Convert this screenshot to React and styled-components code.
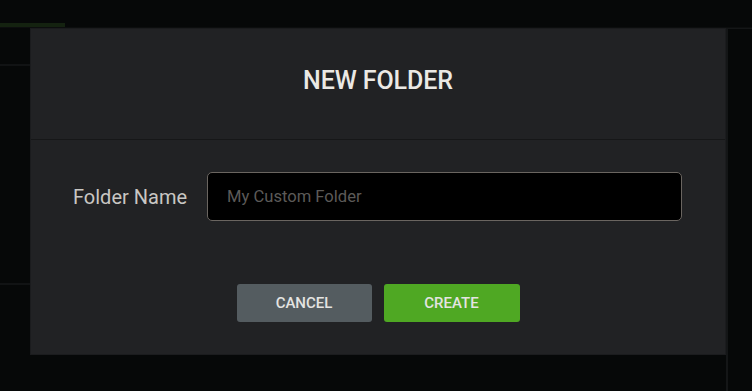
import React from "react";
import styled, { createGlobalStyle } from "styled-components";

const Global = createGlobalStyle`
  html, body { margin: 0; padding: 0; background: #060808; }
  body { font-family: Roboto, "Liberation Sans", Arial, sans-serif; }
  * { box-sizing: border-box; }
`;

const Page = styled.div`
  position: relative;
  width: 752px;
  height: 391px;
  overflow: hidden;
  background: #060808;
  display: flex;
  flex-direction: column;
`;

const TopBar = styled.div`
  height: 28px;
  display: flex;
  align-items: flex-end;
  border-bottom: 1px solid #0c0e0e;
`;

const Tab = styled.div`
  width: 65px;
  height: 4px;
  background: #142210;
`;

const Body = styled.div`
  flex: 1;
  display: flex;
`;

const LeftCol = styled.div`
  width: 30px;
  display: flex;
  flex-direction: column;
`;

const Cell = styled.div`
  height: ${(p) => p.h}px;
  border-bottom: 2px solid #111314;
`;

const Center = styled.div`
  flex: 1;
`;

const RightCol = styled.div`
  width: 26px;
  border-left: 2px solid #141617;
  border-top: 1px solid #141617;
`;

const Dialog = styled.div`
  position: absolute;
  left: 30px;
  top: 28px;
  width: 696px;
  height: 327px;
  background: #212224;
  border: 1px solid #1b1c1e;
  display: flex;
  flex-direction: column;
`;

const Header = styled.div`
  height: 111px;
  display: flex;
  align-items: center;
  justify-content: center;
  border-bottom: 1px solid #161718;
`;

const Title = styled.h2`
  margin: -8px 0 0 0;
  font-size: 25px;
  font-weight: 500;
  color: #ebe9e5;
  letter-spacing: -0.1px;
`;

const Content = styled.div`
  display: flex;
  flex-direction: column;
  flex: 1;
`;

const FieldRow = styled.div`
  display: flex;
  align-items: center;
  padding: 32px 0 0 42px;
  gap: 20px;
`;

const Label = styled.label`
  font-size: 20px;
  color: #c9c7c3;
  width: 114px;
  white-space: nowrap;
`;

const Input = styled.input`
  width: 475px;
  height: 49px;
  background: #000;
  border: 1px solid #6a6560;
  border-radius: 5px;
  padding: 0 19px;
  font-family: Roboto, "Liberation Sans", Arial, sans-serif;
  font-size: 16.6px;
  color: #ddd;
  outline: none;
  &::placeholder { color: #5c5a58; }
`;

const Actions = styled.div`
  display: flex;
  justify-content: center;
  gap: 12px;
  margin-top: 63px;
`;

const Button = styled.button`
  width: ${(p) => p.w}px;
  height: 38px;
  border: none;
  border-radius: 3px;
  background: ${(p) => (p.primary ? "#4fa823" : "#545c60")};
  color: #e4e4e2;
  font-family: Roboto, "Liberation Sans", Arial, sans-serif;
  font-weight: 500;
  font-size: 15px;
  text-transform: uppercase;
  cursor: pointer;
`;

export default function App() {
  return (
    <>
      <Global />
      <Page>
        <TopBar>
          <Tab />
        </TopBar>
        <Body>
          <LeftCol>
            <Cell h={38} />
            <Cell h={219} />
          </LeftCol>
          <Center />
          <RightCol />
        </Body>
        <Dialog>
          <Header>
            <Title>NEW FOLDER</Title>
          </Header>
          <Content>
            <FieldRow>
              <Label>Folder Name</Label>
              <Input placeholder="My Custom Folder" />
            </FieldRow>
            <Actions>
              <Button w={135}>Cancel</Button>
              <Button w={136} primary>Create</Button>
            </Actions>
          </Content>
        </Dialog>
      </Page>
    </>
  );
}
